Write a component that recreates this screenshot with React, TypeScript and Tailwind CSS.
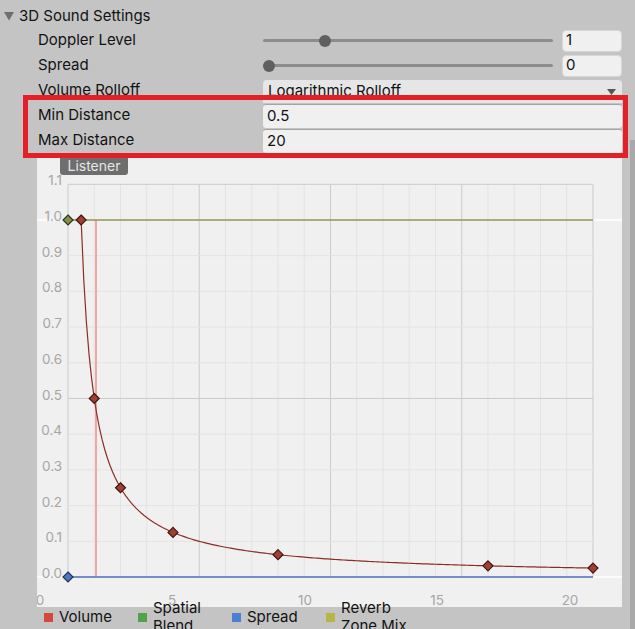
import React from "react"

const X0 = 68
const PX_PER_UNIT = 26.25
const Y0 = 577
const PX_PER_VOL = 357

const xOf = (d: number) => X0 + d * PX_PER_UNIT
const yOf = (v: number) => Y0 - v * PX_PER_VOL

const Diamond = ({ x, y, fill, stroke }: { x: number; y: number; fill: string; stroke: string }) => (
  <polygon
    points={`${x},${y - 5} ${x + 5},${y} ${x},${y + 5} ${x - 5},${y}`}
    fill={fill}
    stroke={stroke}
    strokeWidth={1.2}
  />
)

const RolloffGraph = () => {
  const curve: string[] = []
  for (let d = 0.5; d <= 20.0001; d += 0.1) {
    curve.push(`${xOf(d).toFixed(2)},${yOf(0.5 / d).toFixed(2)}`)
  }
  const keys = [0.5, 1, 2, 4, 8, 16, 20]
  const vLines = Array.from({ length: 21 }, (_, k) => k)
  const hLines = Array.from({ length: 12 }, (_, k) => k)

  return (
    <svg width={585} height={451} viewBox="37 156 585 451" className="block">
      {/* white guide lines across the panel */}
      <line x1={37} y1={220} x2={622} y2={220} stroke="#ffffff" strokeWidth={1.5} />
      <line x1={37} y1={577} x2={622} y2={577} stroke="#ffffff" strokeWidth={1.5} />

      {vLines.map((k) => (
        <line
          key={"v" + k}
          x1={xOf(k)}
          y1={yOf(1.1)}
          x2={xOf(k)}
          y2={Y0}
          stroke={k % 5 === 0 ? "#cbcbcb" : "#e3e3e3"}
          strokeWidth={1}
        />
      ))}
      {hLines.map((k) => (
        <line
          key={"h" + k}
          x1={X0}
          y1={yOf(k / 10)}
          x2={xOf(20)}
          y2={yOf(k / 10)}
          stroke={k % 5 === 0 || k === 11 ? "#cbcbcb" : "#e3e3e3"}
          strokeWidth={1}
        />
      ))}

      {hLines.map((k) => (
        <text
          key={"yl" + k}
          x={62}
          y={yOf(k / 10) + 1}
          textAnchor="end"
          fontSize={13.5}
          fill="#a6a6a6"
          fontFamily="Inter, 'Noto Sans', sans-serif"
        >
          {(k / 10).toFixed(1)}
        </text>
      ))}
      {[
        [40, "0"],
        [172, "5"],
        [305, "10"],
        [437, "15"],
        [570, "20"],
      ].map(([x, t]) => (
        <text
          key={"xl" + t}
          x={x as number}
          y={604.5}
          textAnchor="middle"
          fontSize={13.5}
          fill="#a6a6a6"
          fontFamily="Inter, 'Noto Sans', sans-serif"
        >
          {t}
        </text>
      ))}

      {/* listener marker */}
      <line x1={96} y1={220} x2={96} y2={577} stroke="#f1a7a1" strokeWidth={2} />

      {/* reverb zone mix + spread */}
      <line x1={X0} y1={220} x2={xOf(20)} y2={220} stroke="#9a9a55" strokeWidth={1.3} />
      <line x1={X0} y1={577} x2={xOf(20)} y2={577} stroke="#4b76bb" strokeWidth={1.3} />

      {/* volume curve */}
      <polyline points={curve.join(" ")} fill="none" stroke="#8c2d24" strokeWidth={1.2} />

      <Diamond x={X0} y={220} fill="#83904a" stroke="#2f3318" />
      <Diamond x={X0} y={577} fill="#4a79c2" stroke="#1d3556" />
      {keys.map((d) => (
        <Diamond key={d} x={xOf(d)} y={yOf(0.5 / d)} fill="#a43d33" stroke="#3e1712" />
      ))}
    </svg>
  )
}

const SliderRow = ({ label, pos, value }: { label: string; pos: number; value: string }) => (
  <div className="flex h-[25px] items-center">
    <div className="w-[225px] pl-[38px] box-content">{label}</div>
    <div className="relative flex h-full w-[290px] items-center">
      <div className="h-[3px] w-full rounded-full bg-[#8c8c8c]" />
      <div
        className="absolute top-1/2 h-[12px] w-[12px] -translate-x-1/2 -translate-y-1/2 rounded-full bg-[#5f5f5f]"
        style={{ left: pos }}
      />
    </div>
    <div className="ml-[9px] flex h-[22px] w-[60px] items-center rounded-[4px] border border-[#d6d6d6] bg-[#f0f0f0] pl-[3px]">
      {value}
    </div>
  </div>
)

const FieldRow = ({ label, value }: { label: string; value: string }) => (
  <div className="flex h-[25px] items-center">
    <div className="w-[225px] pl-[38px] box-content">{label}</div>
    <div className="flex h-[24px] w-[359px] items-center rounded-[3px] border-t border-[#a4a4a4] bg-[#f0f0f0] pl-[4px]">
      {value}
    </div>
  </div>
)

const LegendItem = ({ color, label }: { color: string; label: string }) => (
  <div className="flex w-[94px] items-center">
    <div className="h-[9px] w-[9px] shrink-0" style={{ background: color }} />
    <div className="ml-[6px] w-[74px] leading-[18px]">{label}</div>
  </div>
)

export default function App() {
  return (
    <div
      className="relative h-[629px] w-[635px] overflow-hidden bg-[#c4c4c4] text-[15px] text-[#121212]"
      style={{ fontFamily: "Inter, 'Noto Sans', sans-serif" }}
    >
      <div className="absolute right-0 top-[140px] h-[489px] w-[5px] bg-[#a9a9a9]" />

      <div className="pt-[4px]">
        <div className="flex h-[24px] items-center">
          <svg width={10} height={9} viewBox="0 0 10 9" className="ml-[4px]">
            <polygon points="0,0 10,0 5,8.5" fill="#6f6f6f" />
          </svg>
          <span className="ml-[5px]">3D Sound Settings</span>
        </div>

        <SliderRow label="Doppler Level" pos={62} value="1" />
        <SliderRow label="Spread" pos={6} value="0" />

        <div className="flex h-[25px] items-center">
          <div className="w-[225px] pl-[38px] box-content">Volume Rolloff</div>
          <div className="flex h-[23px] w-[359px] items-center justify-between self-end rounded-t-[4px] bg-[#e6e6e6] pl-[5px] pr-[6px]">
            <span>Logarithmic Rolloff</span>
            <svg width={9} height={6} viewBox="0 0 9 6">
              <polygon points="0,0 9,0 4.5,6" fill="#555555" />
            </svg>
          </div>
        </div>

        <FieldRow label="Min Distance" value="0.5" />
        <FieldRow label="Max Distance" value="20" />

        <div className="relative ml-[37px] mr-[13px] mt-[3px] h-[451px] bg-[#f0f0f0]">
          <RolloffGraph />
          <div className="absolute left-[23px] top-0 flex h-[19px] w-[68px] items-center justify-center rounded-b-[3px] bg-[#6e6e6e] text-[14px] text-[#e6e6e6]">
            Listener
          </div>
        </div>

        <div className="relative flex h-[20px] items-center pl-[44px]">
          <LegendItem color="#d4493c" label="Volume" />
          <LegendItem color="#4fa44a" label="Spatial Blend" />
          <LegendItem color="#4a80d2" label="Spread" />
          <LegendItem color="#b7b545" label="Reverb Zone Mix" />
        </div>
      </div>

      {/* annotation frame */}
      <div className="absolute left-[23px] top-[95px] h-[63px] w-[605px] border-[5px] border-[#e31f27]" />
    </div>
  )
}
